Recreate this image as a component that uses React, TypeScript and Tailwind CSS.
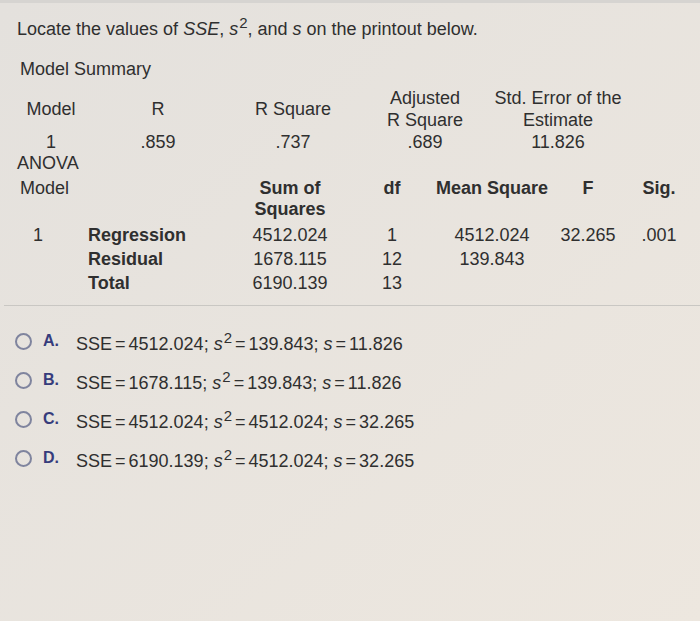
const font = "font-['Liberation_Sans',Arial,sans-serif]"

type CellProps = { children: React.ReactNode; className?: string }

function Cell({ children, className = '' }: CellProps) {
  // centers content even when it is wider than its column
  return (
    <div className={`flex justify-center ${className}`}>
      <div className="whitespace-nowrap text-center">{children}</div>
    </div>
  )
}

function Sq() {
  return <span className="relative -top-[7px] pl-[1px] align-baseline text-[15px] leading-none">2</span>
}

function Eq() {
  return <span className="px-[3px]">=</span>
}

const anovaRows = [
  { n: '1', label: 'Regression', ss: '4512.024', df: '1', ms: '4512.024', f: '32.265', sig: '.001' },
  { n: '', label: 'Residual', ss: '1678.115', df: '12', ms: '139.843', f: '', sig: '' },
  { n: '', label: 'Total', ss: '6190.139', df: '13', ms: '', f: '', sig: '' },
]

const options = [
  { key: 'A', sse: '4512.024', s2: '139.843', s: '11.826' },
  { key: 'B', sse: '1678.115', s2: '139.843', s: '11.826' },
  { key: 'C', sse: '4512.024', s2: '4512.024', s: '32.265' },
  { key: 'D', sse: '6190.139', s2: '4512.024', s: '32.265' },
]

export default function App() {
  return (
    <div
      className={`${font} min-h-screen w-full border-t-[3px] border-[#d6d4d1] bg-linear-to-br from-[#e4e1dd] to-[#ede7df] text-[18px] text-[#2f2f2f]`}
    >
      {/* question */}
      <div className="pl-[17px] pt-[14px] leading-6">
        Locate the values of <i>SSE</i>, <i>s</i>
        <Sq />, and <i>s</i> on the printout below.
      </div>

      <div className="mt-4 pl-[20px] leading-6">Model Summary</div>

      {/* model summary table */}
      <div className="mt-[6px] pl-[17px]">
        <div className="grid grid-cols-[68px_146px_124px_140px_126px] items-center leading-[22px]">
          <Cell>Model</Cell>
          <Cell>R</Cell>
          <Cell>R Square</Cell>
          <Cell>
            Adjusted
            <br />R Square
          </Cell>
          <Cell>
            Std. Error of the
            <br />
            Estimate
          </Cell>
        </div>
        <div className="grid grid-cols-[68px_146px_124px_140px_126px] leading-[22px]">
          <Cell>1</Cell>
          <Cell>.859</Cell>
          <Cell>.737</Cell>
          <Cell>.689</Cell>
          <Cell>11.826</Cell>
        </div>
      </div>

      {/* anova table */}
      <div className="pl-[17px] leading-5">ANOVA</div>
      <div className="mt-[5px] pl-[17px]">
        <div className="grid grid-cols-[71px_152px_100px_104px_96px_96px_46px] items-start leading-[21px]">
          <div className="col-span-2 pl-[3px]">Model</div>
          <Cell className="font-bold">
            Sum of
            <br />
            Squares
          </Cell>
          <Cell className="font-bold">df</Cell>
          <Cell className="font-bold">Mean Square</Cell>
          <Cell className="font-bold">F</Cell>
          <Cell className="font-bold">Sig.</Cell>
        </div>
        <div className="mt-[3px]">
          {anovaRows.map((r) => (
            <div
              key={r.label}
              className="grid grid-cols-[71px_152px_100px_104px_96px_96px_46px] leading-6"
            >
              <div className="pl-[16px]">{r.n}</div>
              <div className="font-bold">{r.label}</div>
              <Cell>{r.ss}</Cell>
              <Cell>{r.df}</Cell>
              <Cell>{r.ms}</Cell>
              <Cell>{r.f}</Cell>
              <Cell>{r.sig}</Cell>
            </div>
          ))}
        </div>
      </div>

      <div className="ml-[4px] mt-[10px] border-t border-[#c9c7c3]" />

      {/* answer choices */}
      <div className="mt-[19px] pl-[15px]">
        {options.map((o) => (
          <div key={o.key} className="flex h-[39px] items-start">
            <div className="mt-[8px] h-[17px] w-[17px] shrink-0 rounded-full border-2 border-[#7f849e]" />
            <div className="ml-[11px] mt-[6px] w-[33px] text-[16px] font-bold leading-5 text-[#363c7c]">
              {o.key}.
            </div>
            <div className="mt-[7px] whitespace-nowrap leading-6">
              SSE<Eq />{o.sse}; <i>s</i>
              <Sq />
              <Eq />{o.s2}; <i>s</i>
              <Eq />{o.s}
            </div>
          </div>
        ))}
      </div>
    </div>
  )
}
